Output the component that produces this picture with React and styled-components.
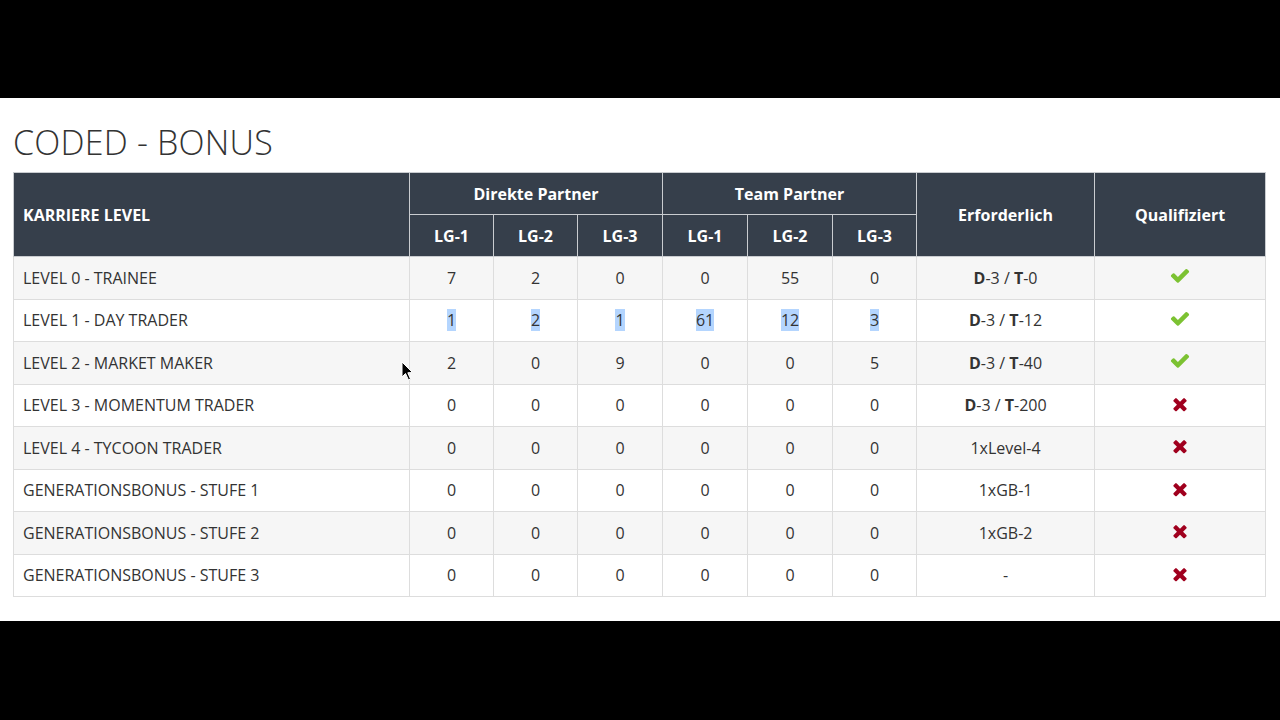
import React from "react";
import styled, { createGlobalStyle } from "styled-components";

const GlobalStyle = createGlobalStyle`
  html, body {
    margin: 0;
    padding: 0;
    background: #000;
    font-family: "Open Sans", "Liberation Sans", sans-serif;
  }
`;

const Screen = styled.div`
  width: 1280px;
  height: 720px;
  background: #000;
  padding-top: 98px;
  box-sizing: border-box;
`;

const Page = styled.section`
  position: relative;
  background: #fff;
  height: 523px;
  padding: 0 15px 0 13px;
  box-sizing: border-box;
  overflow: hidden;
`;

const Title = styled.h1`
  margin: 0;
  padding-top: 24px;
  height: 74px;
  box-sizing: border-box;
  font-weight: 300;
  font-size: 34px;
  line-height: 40px;
  color: #333;
  letter-spacing: 0.2px;
`;

const Table = styled.table`
  width: 1252px;
  border-collapse: collapse;
  table-layout: fixed;
  font-size: 16px;
  color: #333;
  border: 1px solid #ddd;
`;

const HeadCell = styled.th`
  background: #363f4b;
  color: #fff;
  font-weight: 700;
  height: 42px;
  padding: 0 9px;
  border: 1px solid #c9ccd0;
  text-align: ${(p) => (p.$left ? "left" : "center")};
  box-sizing: border-box;
`;

const Row = styled.tr`
  background: ${(p) => (p.$striped ? "#f6f6f6" : "#fff")};
`;

const Cell = styled.td`
  height: 42.5px;
  padding: 0 9px;
  border: 1px solid #ddd;
  text-align: ${(p) => (p.$left ? "left" : "center")};
  box-sizing: border-box;
`;

const Picked = styled.span`
  background: #b4d5fe;
`;

const Icon = styled.svg`
  display: inline-block;
  vertical-align: middle;
  position: relative;
  top: -3px;
  fill: ${(p) => p.$color};
`;

const Cursor = styled.svg`
  position: absolute;
  left: 401px;
  top: 263px;
  pointer-events: none;
`;

const Check = () => (
  <Icon $color="#7cc232" width="22" height="21" viewBox="0 0 1792 1792">
    <path d="M1671 566q0 40-28 68l-724 724-136 136q-28 28-68 28t-68-28l-136-136-362-362q-28-28-28-68t28-68l136-136q28-28 68-28t68 28l294 295 656-657q28-28 68-28t68 28l136 136q28 28 28 68z" />
  </Icon>
);

const Cross = () => (
  <Icon $color="#a0001e" width="16" height="20" viewBox="0 0 1408 1792">
    <path d="M1298 1322q0 40-28 68l-136 136q-28 28-68 28t-68-28l-294-294-294 294q-28 28-68 28t-68-28l-136-136q-28-28-28-68t28-68l294-294-294-294q-28-28-28-68t28-68l136-136q28-28 68-28t68 28l294 294 294-294q28-28 68-28t68 28l136 136q28 28 28 68t-28 68l-294 294 294 294q28 28 28 68z" />
  </Icon>
);

const req = (d, t) => (
  <>
    <b>D</b>-{d} / <b>T</b>-{t}
  </>
);

const rows = [
  { name: "LEVEL 0 - TRAINEE", vals: [7, 2, 0, 0, 55, 0], req: req(3, 0), ok: true },
  { name: "LEVEL 1 - DAY TRADER", vals: [1, 2, 1, 61, 12, 3], req: req(3, 12), ok: true, picked: true },
  { name: "LEVEL 2 - MARKET MAKER", vals: [2, 0, 9, 0, 0, 5], req: req(3, 40), ok: true },
  { name: "LEVEL 3 - MOMENTUM TRADER", vals: [0, 0, 0, 0, 0, 0], req: req(3, 200), ok: false },
  { name: "LEVEL 4 - TYCOON TRADER", vals: [0, 0, 0, 0, 0, 0], req: "1xLevel-4", ok: false },
  { name: "GENERATIONSBONUS - STUFE 1", vals: [0, 0, 0, 0, 0, 0], req: "1xGB-1", ok: false },
  { name: "GENERATIONSBONUS - STUFE 2", vals: [0, 0, 0, 0, 0, 0], req: "1xGB-2", ok: false },
  { name: "GENERATIONSBONUS - STUFE 3", vals: [0, 0, 0, 0, 0, 0], req: "-", ok: false },
];

const widths = [396, 84, 84, 85, 85, 85, 84, 178, 171];

export default function App() {
  return (
    <>
      <GlobalStyle />
      <Screen>
        <Page>
          <Title>CODED - BONUS</Title>
          <Table>
            <colgroup>
              {widths.map((w, i) => (
                <col key={i} style={{ width: w }} />
              ))}
            </colgroup>
            <thead>
              <tr>
                <HeadCell rowSpan={2} $left>
                  KARRIERE LEVEL
                </HeadCell>
                <HeadCell colSpan={3}>Direkte Partner</HeadCell>
                <HeadCell colSpan={3}>Team Partner</HeadCell>
                <HeadCell rowSpan={2}>Erforderlich</HeadCell>
                <HeadCell rowSpan={2}>Qualifiziert</HeadCell>
              </tr>
              <tr>
                {["LG-1", "LG-2", "LG-3", "LG-1", "LG-2", "LG-3"].map((l, i) => (
                  <HeadCell key={i}>{l}</HeadCell>
                ))}
              </tr>
            </thead>
            <tbody>
              {rows.map((r, i) => (
                <Row key={r.name} $striped={i % 2 === 0}>
                  <Cell $left>{r.name}</Cell>
                  {r.vals.map((v, j) => (
                    <Cell key={j}>{r.picked ? <Picked>{v}</Picked> : v}</Cell>
                  ))}
                  <Cell>{r.req}</Cell>
                  <Cell>{r.ok ? <Check /> : <Cross />}</Cell>
                </Row>
              ))}
            </tbody>
          </Table>
          <Cursor width="14" height="21" viewBox="0 0 14 21">
            <path d="M1 1 L1 16 L4.5 12.5 L7.5 19 L9.5 18 L6.8 11.8 L11.5 11.5 Z" fill="#000" stroke="#fff" strokeWidth="1" />
          </Cursor>
        </Page>
      </Screen>
    </>
  );
}
